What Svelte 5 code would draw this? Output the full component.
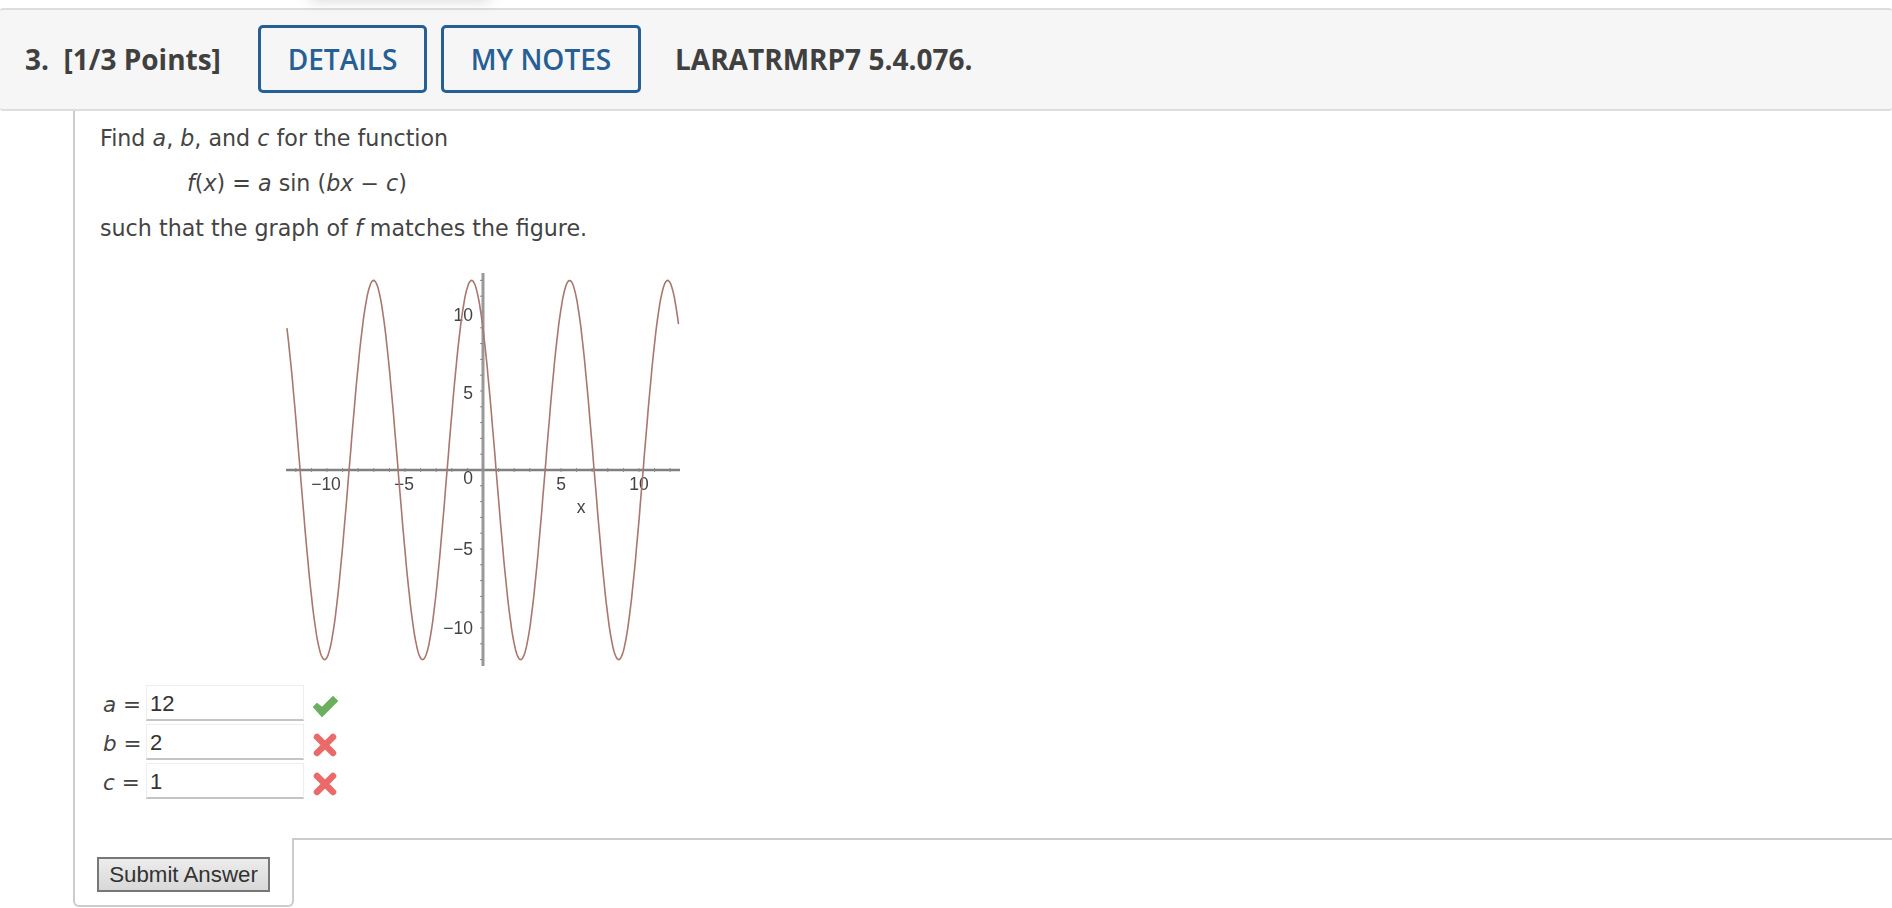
<script>
  // scala del grafico in pixel, origine dentro l'svg
  const UX = 15.6
  const UY = 15.8
  const LABEL_UY = 15.65
  const OX = 197
  const OY = 234

  const sx = (x) => OX + x * UX
  const sy = (y) => OY - y * UY

  const curve = []
  for (let x = -12.57; x <= 12.56; x += 0.05) {
    const y = 12 * Math.sin(x + 2.3)
    curve.push(sx(x).toFixed(1) + ',' + sy(y).toFixed(1))
  }
  const points = curve.join(' ')

  const xTicks = []
  for (let i = -12; i <= 12; i++) xTicks.push(i)
  const yTicks = []
  for (let i = -12; i <= 12; i++) yTicks.push(i)

  const xLabels = [
    { t: '−10', v: -10 },
    { t: '−5', v: -5 },
    { t: '5', v: 5 },
    { t: '10', v: 10 },
  ]
  const yLabels = [
    { t: '10', v: 10 },
    { t: '5', v: 5 },
    { t: '−5', v: -5 },
    { t: '−10', v: -10 },
  ]

  const answers = [
    { name: 'a', value: '12', ok: true },
    { name: 'b', value: '2', ok: false },
    { name: 'c', value: '1', ok: false },
  ]
</script>

<div class="page">
  <div class="shadow"></div>
  <header class="bar">
    <span class="points">3.&nbsp; [1/3 Points]</span>
    <span class="btn details">DETAILS</span>
    <span class="btn notes">MY NOTES</span>
    <span class="code">LARATRMRP7 5.4.076.</span>
  </header>

  <main class="question">
    <p class="line">Find <i>a</i>, <i>b</i>, and <i>c</i> for the function</p>
    <p class="line formula"><i>f</i>(<i>x</i>) = <i>a</i> sin (<i>bx</i> − <i>c</i>)</p>
    <p class="line">such that the graph of <i>f</i> matches the figure.</p>

    <svg class="graph" width="400" height="400" viewBox="0 0 400 400">
      <line class="axis-x" x1="0" y1={OY} x2="394" y2={OY} />
      <line class="axis-y" x1={OX} y1="37" x2={OX} y2="430" />
      {#each xTicks as t}
        <line class="tick" x1={sx(t)} y1={OY - 2} x2={sx(t)} y2={OY + 2} />
      {/each}
      {#each yTicks as t}
        <line class="tick" x1={OX - 3} y1={sy(t)} x2={OX} y2={sy(t)} />
      {/each}
      {#each xLabels as l}
        <text class="lbl" x={sx(l.v) - (l.v < 0 ? 1 : 0)} y={OY + 20} text-anchor="middle">{l.t}</text>
      {/each}
      {#each yLabels as l}
        <text class="lbl" x={OX - 10} y={OY - l.v * LABEL_UY + 7} text-anchor="end">{l.t}</text>
      {/each}
      <text class="lbl" x={OX - 15} y={OY + 14} text-anchor="middle">0</text>
      <text class="lbl" x={OX + 98} y={OY + 43} text-anchor="middle">x</text>
      <polyline class="sine" {points} />
    </svg>

    <div class="answers">
      {#each answers as a}
        <div class="answer">
          <span class="name"><i>{a.name}</i> =</span>
          <span class="field">{a.value}</span>
          {#if a.ok}
            <svg class="mark" width="26" height="26" viewBox="0 0 26 26">
              <path d="M1 14 L5 10 L10 14 L21 3 L26 8 L10 24 Z" fill="#6cb05f" stroke="#5fa356" stroke-width="0.5" stroke-linejoin="round" />
            </svg>
          {:else}
            <svg class="mark" width="26" height="26" viewBox="0 0 26 26">
              <path d="M5 5 L21 21 M21 5 L5 21" stroke="#ea6a6a" stroke-width="6.5" stroke-linecap="round" />
            </svg>
          {/if}
        </div>
      {/each}
    </div>
  </main>

  <footer class="foot">
    <div class="submit-box">
      <span class="submit">Submit Answer</span>
    </div>
    <div class="rest"></div>
  </footer>
</div>

<style>
  :global(body) {
    background: #fff;
  }

  .page {
    position: relative;
    width: 1892px;
    height: 908px;
    overflow: hidden;
    font-family: 'Open Sans', sans-serif;
    color: #444;
  }

  /* ombra del menu che sta sopra la pagina */
  .shadow {
    position: absolute;
    left: 310px;
    top: -12px;
    width: 180px;
    height: 12px;
    box-shadow: 0 0 14px rgba(0, 0, 0, 0.18);
  }

  .bar {
    display: flex;
    align-items: center;
    box-sizing: border-box;
    height: 103px;
    margin-top: 8px;
    padding-left: 25px;
    padding-bottom: 2px;
    background: #f6f6f6;
    border-top: 2px solid #ddd;
    border-bottom: 2px solid #ddd;
    border-radius: 3px;
  }

  .points {
    width: 233px;
    font-size: 28px;
    font-weight: 700;
    color: #404040;
  }

  .btn {
    display: flex;
    align-items: center;
    justify-content: center;
    box-sizing: border-box;
    height: 68px;
    border: 3px solid #265f94;
    border-radius: 5px;
    font-size: 28px;
    font-weight: 600;
    color: #265f94;
  }

  .details {
    width: 169px;
  }

  .notes {
    width: 200px;
    margin-left: 14px;
  }

  .code {
    margin-left: 34px;
    font-size: 28px;
    font-weight: 700;
    color: #404040;
  }

  .question {
    box-sizing: border-box;
    height: 728px;
    margin-left: 73px;
    padding: 13px 0 0 25px;
    border-left: 2px solid #ccc;
  }

  .line {
    margin: 0 0 16px;
    height: 29px;
    line-height: 29px;
    font-family: 'DejaVu Sans', sans-serif;
    font-size: 22.2px;
    color: #444;
  }

  .formula {
    padding-left: 87px;
  }

  .graph {
    display: block;
    margin: -23px 0 0 186px;
    overflow: visible;
    filter: blur(0.5px);
  }

  .axis-x {
    stroke: #808080;
    stroke-width: 2.5;
  }

  .axis-y {
    stroke: #999;
    stroke-width: 3;
  }

  .tick {
    stroke: #888;
    stroke-width: 1;
  }

  .sine {
    fill: none;
    stroke: #a8776f;
    stroke-width: 1.6;
  }

  .lbl {
    font-family: 'Liberation Sans', sans-serif;
    font-size: 17.5px;
    fill: #444;
  }

  .answers {
    display: flex;
    flex-direction: column;
    gap: 3px;
    margin-top: 49px;
  }

  .answer {
    display: flex;
    align-items: center;
    height: 36px;
  }

  .name {
    width: 46px;
    padding-left: 3px;
    padding-top: 2px;
    box-sizing: border-box;
    font-family: 'DejaVu Sans', sans-serif;
    font-size: 21.5px;
    white-space: nowrap;
    color: #444;
  }

  .field {
    box-sizing: border-box;
    width: 158px;
    height: 36px;
    padding-left: 3px;
    line-height: 36px;
    border: 1px solid #eee;
    border-bottom: 2px solid #c4c4c4;
    font-family: 'Liberation Sans', sans-serif;
    font-size: 22px;
    color: #333;
  }

  .mark {
    margin-top: 6px;
    margin-left: 8px;
    filter: blur(0.5px);
  }

  .foot {
    display: flex;
    height: 69px;
    margin-top: -1px;
    margin-left: 73px;
  }

  .submit-box {
    box-sizing: border-box;
    width: 221px;
    height: 69px;
    padding: 19px 0 0 22px;
    border-left: 2px solid #ccc;
    border-right: 2px solid #ccc;
    border-bottom: 2px solid #ccc;
    border-radius: 0 0 6px 6px;
  }

  .submit {
    display: flex;
    align-items: center;
    justify-content: center;
    box-sizing: border-box;
    width: 173px;
    height: 35px;
    border: 2px solid #777;
    background: linear-gradient(#ececec, #d8d8d8);
    font-family: 'Liberation Sans', sans-serif;
    font-size: 22.3px;
    color: #333;
  }

  .rest {
    flex: 1;
    border-top: 2px solid #ccc;
  }
</style>
